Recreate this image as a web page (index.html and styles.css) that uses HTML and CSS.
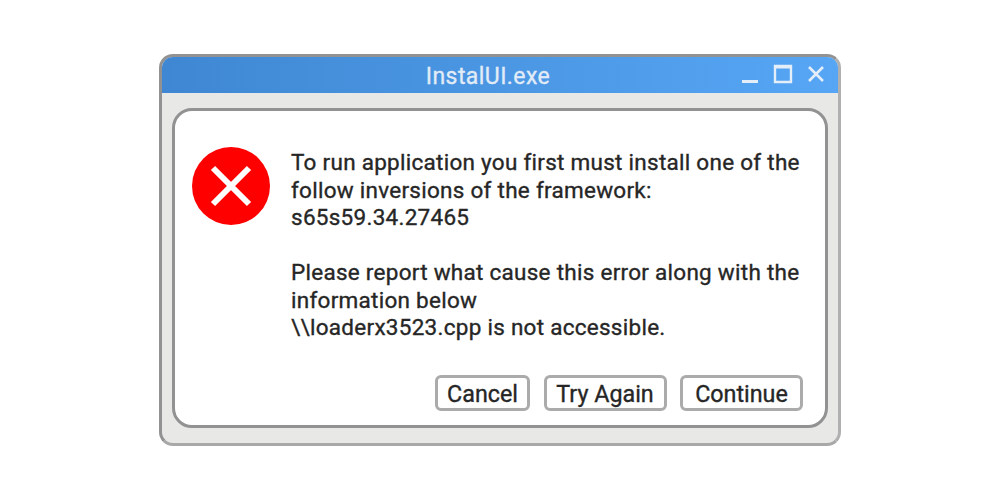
FILE: index.html
```html
<!DOCTYPE html>
<html>
<head>
    <title>InstalUI.exe</title>
    <link rel="stylesheet" href="styles.css">
</head>
<body>
    <div class="window">
        <div class="title-bar">
            <span class="title">InstalUI.exe</span>
            <div class="window-controls">
                <svg class="control" width="18" height="24" viewBox="0 0 18 24">
                    <path d="M1 21.5H17" stroke="#e4eef8" stroke-width="3" fill="none"/>
                </svg>
                <svg class="control" width="20" height="24" viewBox="0 0 20 24">
                    <path d="M2 6H18V22H2Z" stroke="#e4eef8" stroke-width="2.4" fill="none"/>
                    <path d="M2 7H18" stroke="#e4eef8" stroke-width="3" fill="none"/>
                </svg>
                <svg class="control" width="18" height="24" viewBox="0 0 18 24">
                    <path d="M2 7L16 21M16 7L2 21" stroke="#e4eef8" stroke-width="2.6" fill="none"/>
                </svg>
            </div>
        </div>
        <div class="body">
            <div class="panel">
                <div class="message">
                    <svg class="error-icon" width="78" height="78" viewBox="0 0 78 78">
                        <circle cx="39" cy="39" r="39" fill="#fe0000"/>
                        <path d="M21 21L57 57M57 21L21 57" stroke="#fff" stroke-width="6" fill="none"/>
                    </svg>
                    <div class="text">
                        <p>To run application you first must install one of the<br>follow inversions of the framework:<br>s65s59.34.27465</p>
                        <p>Please report what cause this error along with the<br>information below<br>\\loaderx3523.cpp is not accessible.</p>
                    </div>
                </div>
                <div class="buttons">
                    <button class="btn">Cancel</button>
                    <button class="btn btn-wide">Try Again</button>
                    <button class="btn btn-wide">Continue</button>
                </div>
            </div>
        </div>
    </div>
</body>
</html>
```

FILE: styles.css
```css
body {
    margin: 0;
    height: 500px;
    background: #fff;
    display: flex;
    align-items: center;
    justify-content: center;
    font-family: Roboto, sans-serif;
    overflow: hidden;
}

.window {
    box-sizing: border-box;
    width: 682px;
    height: 392px;
    border: 3px solid #999;
    border-color: #929292 #b0b0b0 #a8a8a8 #929292;
    border-radius: 14px;
    background: #e8e8e7;
    display: flex;
    flex-direction: column;
    overflow: hidden;
}

/* Title bar */
.title-bar {
    height: 36px;
    flex-shrink: 0;
    background: linear-gradient(90deg, #3f87d2, #56a6f5);
    position: relative;
    display: flex;
    align-items: center;
    justify-content: center;
}

.title {
    color: #e2ecf7;
    font-size: 23px;
    font-weight: 400;
    letter-spacing: 0.43px;
    margin-left: -24px;
    padding-top: 3px;
    -webkit-text-stroke: 0.3px #e2ecf7;
}

.window-controls {
    position: absolute;
    top: 3px;
    right: 13px;
    display: flex;
    align-items: flex-start;
    gap: 14px;
}

/* Main area */
.body {
    flex: 1;
    padding: 15px 10px;
    display: flex;
}

.panel {
    flex: 1;
    box-sizing: border-box;
    border: 3px solid #929292;
    border-radius: 20px;
    background: #fff;
    padding: 36px 22px 14px 17px;
    display: flex;
    flex-direction: column;
    justify-content: space-between;
}

.message {
    display: flex;
    gap: 21px;
}

.error-icon {
    flex-shrink: 0;
}

.text {
    color: #262626;
    font-size: 22.5px;
    font-weight: 400;
    letter-spacing: 0.27px;
    line-height: 27.5px;
    white-space: nowrap;
    margin-top: 2px;
    -webkit-text-stroke: 0.35px #262626;
}

.text p {
    margin: 0 0 27.5px 0;
}

.text p:last-child {
    margin-bottom: 0;
}

.buttons {
    display: flex;
    justify-content: flex-end;
    gap: 13.5px;
}

.btn {
    box-sizing: border-box;
    height: 36px;
    padding: 1px 9px 0;
    border: 3px solid #ababab;
    border-radius: 6px;
    background: #fff;
    color: #262626;
    font-family: Roboto, sans-serif;
    font-size: 23.3px;
    font-weight: 400;
    -webkit-text-stroke: 0.35px #262626;
}

.btn-wide {
    min-width: 123px;
}
```
